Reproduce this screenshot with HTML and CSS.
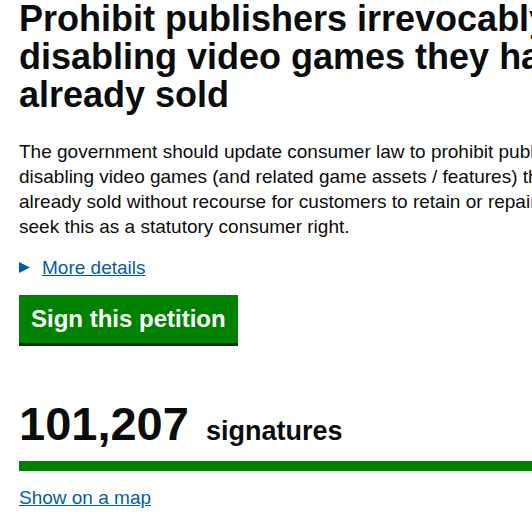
FILE: index.html
```html
<!DOCTYPE html>
<html lang="en">
<head>
<meta charset="utf-8">
<title>Prohibit publishers irrevocably disabling video games they have already sold</title>
<link rel="stylesheet" href="styles.css">
</head>
<body>
<main class="page">
  <h1 class="title">Prohibit publishers irrevocably disabling video games they have already sold</h1>
  <p class="lede">The government should update consumer law to prohibit publishers from disabling video games (and related game assets / features) they have already sold without recourse for customers to retain or repair them. We seek this as a statutory consumer right.</p>
  <details class="more">
    <summary class="more-summary"><svg class="more-arrow" viewBox="0 0 11 11" aria-hidden="true"><path d="M0 0 L11 5.5 L0 11 Z"/></svg><span class="more-link">More details</span></summary>
  </details>
  <div class="actions">
    <a class="sign-button" href="#">Sign this petition</a>
  </div>
  <div class="count">
    <span class="count-number">101,207</span>
    <span class="count-label">signatures</span>
  </div>
  <div class="count-bar"></div>
  <a class="map-link" href="#">Show on a map</a>
</main>
</body>
</html>
```

FILE: styles.css
```css
html {
  overflow: hidden;
}
body {
  margin: 0;
  background: #ffffff;
  color: #0b0c0c;
  font-family: "Liberation Sans", Arial, sans-serif;
}
.page {
  width: 630px;
  padding: 0 0 0 19px;
}
.title {
  margin: 0 0 25px;
  font-size: 36px;
  line-height: 38px;
  font-weight: 700;
}
.lede {
  margin: 0 0 16px;
  font-size: 19px;
  line-height: 25px;
}
.more-summary {
  display: flex;
  align-items: center;
  list-style: none;
  font-size: 19px;
  line-height: 25px;
  cursor: pointer;
}
.more-summary::-webkit-details-marker {
  display: none;
}
.more-arrow {
  width: 11px;
  height: 11px;
  margin-right: 12px;
  fill: #005ea5;
}
.more-link {
  color: #005ea5;
  text-decoration: underline;
}
.actions {
  display: flex;
  margin-top: 15px;
}
.sign-button {
  padding: 9px 12px;
  background: #008200;
  color: #ffffff;
  font-size: 24px;
  line-height: 30px;
  font-weight: 700;
  text-decoration: none;
  box-shadow: 0 3px 0 #003a00;
}
.count {
  display: flex;
  align-items: baseline;
  gap: 17px;
  margin-top: 58px;
}
.count-number {
  font-size: 47px;
  line-height: 46px;
  font-weight: 700;
}
.count-label {
  font-size: 27px;
  line-height: 30px;
  font-weight: 700;
}
.count-bar {
  margin-top: 14px;
  height: 10px;
  background: #008200;
}
.map-link {
  display: block;
  margin-top: 14px;
  font-size: 19px;
  line-height: 25px;
  color: #005ea5;
}
```
